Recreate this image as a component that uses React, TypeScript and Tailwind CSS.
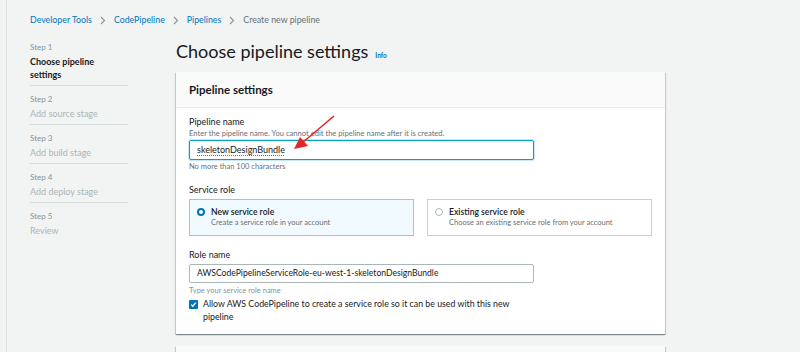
const font = { fontFamily: "Lato, 'Liberation Sans', sans-serif" };

const steps = [
  { step: "Step 1", title: ["Choose pipeline", "settings"], active: true },
  { step: "Step 2", title: ["Add source stage"] },
  { step: "Step 3", title: ["Add build stage"] },
  { step: "Step 4", title: ["Add deploy stage"] },
  { step: "Step 5", title: ["Review"], last: true },
];

function Chevron() {
  return (
    <svg width="6" height="9" viewBox="0 0 6 9" className="mx-[8px]">
      <path d="M1 1l3.5 3.5L1 8" fill="none" stroke="#879596" strokeWidth="1.1" />
    </svg>
  );
}

function Sidebar() {
  return (
    <div className="w-[98px] shrink-0">
      {steps.map((s, i) => (
        <div
          key={s.step}
          className={`${i === 0 ? "pt-[1px]" : "pt-[7px]"} pb-[4px] ${s.last ? "" : "border-b border-[#d5dbdb]"}`}
        >
          <p className="text-[8px] leading-[12px] text-[#879596]">{s.step}</p>
          <p
            className={`mt-[2px] text-[9px] leading-[13px] ${s.active ? "font-bold text-[#16191f]" : "text-[#aab7b8]"}`}
          >
            {s.title.map((t) => (
              <span key={t} className="block">
                {t}
              </span>
            ))}
          </p>
        </div>
      ))}
    </div>
  );
}

function RoleTile({
  title,
  desc,
  selected,
}: {
  title: string;
  desc: string;
  selected?: boolean;
}) {
  return (
    <div
      className={`h-[37px] flex gap-[6px] pl-[7px] pt-[6px] ${selected ? "border border-[#8fcbe3] bg-[#f1faff]" : "border border-[#c8cdcd] bg-white"}`}
    >
      <div className="pt-[2px]">
        {selected ? (
          <div className="h-[8px] w-[8px] rounded-full border-[2.5px] border-[#0073bb] bg-white" />
        ) : (
          <div className="h-[8px] w-[8px] rounded-full border border-[#aab7b8] bg-white" />
        )}
      </div>
      <div>
        <p className="text-[8.6px] leading-[12px] font-semibold text-[#16191f]">{title}</p>
        <p className="text-[7.5px] leading-[10px] text-[#687078]">{desc}</p>
      </div>
    </div>
  );
}

function PipelineCard() {
  return (
    <div className="mt-[10px] bg-white shadow-[0_1px_1px_0_rgba(0,28,36,0.3),1px_1px_1px_0_rgba(0,28,36,0.15),-1px_1px_1px_0_rgba(0,28,36,0.15)]">
      <div className="flex h-[36px] items-center border-b border-[#eaeded] bg-[#fafafa] px-[13px]">
        <h2 className="text-[11.5px] font-bold text-[#16191f]">Pipeline settings</h2>
      </div>
      <div className="px-[13px] pt-[8px] pb-[11px]">
        <p className="text-[9px] leading-[12px] text-[#16191f]">Pipeline name</p>
        <p className="text-[7.6px] leading-[11px] text-[#687078]">
          Enter the pipeline name. You cannot edit the pipeline name after it is created.
        </p>
        <div className="mt-[1px] flex h-[20px] w-[345px] items-center rounded-[2px] border border-[#00a1c9] px-[7px] shadow-[0_0_1px_1px_rgba(0,161,201,0.25)]">
          <span className="text-[9px] text-[#16191f] underline decoration-dotted decoration-[#e0413b] decoration-1 underline-offset-[2px]">
            skeletonDesignBundle
          </span>
        </div>
        <p className="mt-[1px] text-[7.5px] leading-[11px] text-[#687078]">No more than 100 characters</p>

        <p className="mt-[12px] text-[9px] leading-[12px] text-[#16191f]">Service role</p>
        <div className="mt-[3px] grid grid-cols-2 gap-[13px]">
          <RoleTile selected title="New service role" desc="Create a service role in your account" />
          <RoleTile title="Existing service role" desc="Choose an existing service role from your account" />
        </div>

        <p className="mt-[13px] text-[9px] leading-[12px] text-[#16191f]">Role name</p>
        <div className="mt-[3px] flex h-[19px] w-[345px] items-center rounded-[2px] border border-[#aab7b8] px-[7px]">
          <span className="text-[8.6px] text-[#16191f]">
            AWSCodePipelineServiceRole-eu-west-1-skeletonDesignBundle
          </span>
        </div>
        <p className="mt-[2px] text-[7.5px] leading-[11px] text-[#879596]">Type your service role name</p>
        <div className="mt-[1px] flex gap-[5px]">
          <div className="mt-[3px] flex h-[9px] w-[9px] shrink-0 items-center justify-center rounded-[1px] bg-[#0073bb]">
            <svg width="7" height="7" viewBox="0 0 7 7">
              <path d="M1.2 3.6l1.6 1.6 3-3.6" fill="none" stroke="white" strokeWidth="1.3" />
            </svg>
          </div>
          <p className="w-[315px] text-[8.8px] leading-[13px] text-[#16191f]">
            Allow AWS CodePipeline to create a service role so it can be used with this new pipeline
          </p>
        </div>
      </div>
    </div>
  );
}

export default function App() {
  return (
    <div className="relative h-[352px] w-[800px] overflow-hidden bg-[#f2f3f3] pl-[6px]" style={font}>
      <div className="h-full border-l border-[#dde1e1] pl-[23px]">
        <div className="flex h-[40px] items-center text-[8.8px]">
          <span className="text-[#0073bb]">Developer Tools</span>
          <Chevron />
          <span className="text-[#0073bb]">CodePipeline</span>
          <Chevron />
          <span className="text-[#0073bb]">Pipelines</span>
          <Chevron />
          <span className="text-[#687078]">Create new pipeline</span>
        </div>
        <div className="flex">
          <Sidebar />
          <div className="ml-[48px] w-[489px]">
            <div className="flex h-[22px] items-baseline gap-[7px]">
              <h1 className="text-[18px] leading-[22px] text-[#16191f]">Choose pipeline settings</h1>
              <span className="text-[6.5px] font-bold text-[#0073bb]">Info</span>
            </div>
            <PipelineCard />
            <div className="mt-[12px] h-[40px] bg-[#fafafa] shadow-[0_1px_1px_0_rgba(0,28,36,0.3),1px_1px_1px_0_rgba(0,28,36,0.15),-1px_1px_1px_0_rgba(0,28,36,0.15)]" />
          </div>
        </div>
      </div>
      <svg className="pointer-events-none absolute left-0 top-0" width="800" height="352">
        <line x1="334" y1="116" x2="302" y2="143" stroke="#e32626" strokeWidth="1.6" />
        <polygon points="294,149 300,137 308,146" fill="#e32626" />
      </svg>
    </div>
  );
}
